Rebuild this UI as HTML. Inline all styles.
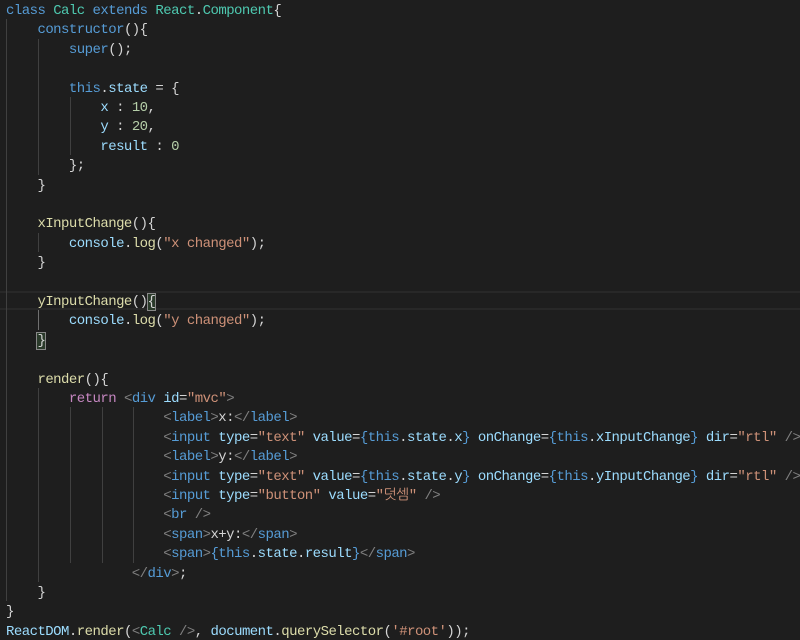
<!DOCTYPE html>
<html><head><meta charset="utf-8"><style>
html,body{margin:0;padding:0;background:#1e1e1e;width:800px;height:640px;overflow:hidden}
#c{position:relative;width:800px;height:640px}
.l{position:absolute;left:6px;height:19.4px;line-height:19.4px;white-space:pre;font-family:"Liberation Mono","NanumGothic",monospace;font-size:14px;letter-spacing:-0.54px;color:#d4d4d4;margin-top:2px}
.g{position:absolute;width:1px;background:#404040}
.k{color:#569cd6}.t{color:#4ec9b0}.v{color:#9cdcfe}.f{color:#dcdcaa}.s{color:#ce9178}.n{color:#b5cea8}.p{color:#c586c0}.b{color:#808080}
.m{outline:1px solid #888;background:#2a3a2a}
</style></head><body><div id="c">
<div style="position:absolute;left:0;top:291px;width:800px;height:19.4px;border-top:2px solid #282828;border-bottom:2px solid #282828;box-sizing:border-box"></div>
<div class="g" style="left:6px;top:19.4px;height:582px"></div>
<div class="g" style="left:38px;top:38.8px;height:135.8px"></div>
<div class="g" style="left:38px;top:232.8px;height:19.4px"></div>
<div class="g" style="left:38px;top:310.4px;height:19.4px;background:#707070"></div>
<div class="g" style="left:38px;top:388px;height:194px"></div>
<div class="g" style="left:70px;top:97px;height:58.2px"></div>
<div class="g" style="left:70px;top:407.4px;height:155.2px"></div>
<div class="g" style="left:102px;top:407.4px;height:155.2px"></div>
<div class="g" style="left:133px;top:407.4px;height:155.2px"></div>
<div class="l" style="top:0"><span class="k">class</span> <span class="t">Calc</span> <span class="k">extends</span> <span class="t">React</span>.<span class="t">Component</span>{</div>
<div class="l" style="top:19.4px">    <span class="k">constructor</span>(){</div>
<div class="l" style="top:38.8px">        <span class="k">super</span>();</div>
<div class="l" style="top:77.6px">        <span class="k">this</span>.<span class="v">state</span> = {</div>
<div class="l" style="top:97px">            <span class="v">x</span> : <span class="n">10</span>,</div>
<div class="l" style="top:116.4px">            <span class="v">y</span> : <span class="n">20</span>,</div>
<div class="l" style="top:135.8px">            <span class="v">result</span> : <span class="n">0</span></div>
<div class="l" style="top:155.2px">        };</div>
<div class="l" style="top:174.6px">    }</div>
<div class="l" style="top:213.4px">    <span class="f">xInputChange</span>(){</div>
<div class="l" style="top:232.8px">        <span class="v">console</span>.<span class="f">log</span>(<span class="s">"x changed"</span>);</div>
<div class="l" style="top:252.2px">    }</div>
<div class="l" style="top:291px">    <span class="f">yInputChange</span>()<span class="m">{</span></div>
<div class="l" style="top:310.4px">        <span class="v">console</span>.<span class="f">log</span>(<span class="s">"y changed"</span>);</div>
<div class="l" style="top:329.8px">    <span class="m">}</span></div>
<div class="l" style="top:368.6px">    <span class="f">render</span>(){</div>
<div class="l" style="top:388px">        <span class="p">return</span> <span class="b">&lt;</span><span class="k">div</span> <span class="v">id</span>=<span class="s">"mvc"</span><span class="b">&gt;</span></div>
<div class="l" style="top:407.4px">                    <span class="b">&lt;</span><span class="k">label</span><span class="b">&gt;</span>x:<span class="b">&lt;/</span><span class="k">label</span><span class="b">&gt;</span></div>
<div class="l" style="top:426.8px">                    <span class="b">&lt;</span><span class="k">input</span> <span class="v">type</span>=<span class="s">"text"</span> <span class="v">value</span>=<span class="k">{this</span>.<span class="v">state</span>.<span class="v">x</span><span class="k">}</span> <span class="v">onChange</span>=<span class="k">{this</span>.<span class="v">xInputChange</span><span class="k">}</span> <span class="v">dir</span>=<span class="s">"rtl"</span> <span class="b">/&gt;</span></div>
<div class="l" style="top:446.2px">                    <span class="b">&lt;</span><span class="k">label</span><span class="b">&gt;</span>y:<span class="b">&lt;/</span><span class="k">label</span><span class="b">&gt;</span></div>
<div class="l" style="top:465.6px">                    <span class="b">&lt;</span><span class="k">input</span> <span class="v">type</span>=<span class="s">"text"</span> <span class="v">value</span>=<span class="k">{this</span>.<span class="v">state</span>.<span class="v">y</span><span class="k">}</span> <span class="v">onChange</span>=<span class="k">{this</span>.<span class="v">yInputChange</span><span class="k">}</span> <span class="v">dir</span>=<span class="s">"rtl"</span> <span class="b">/&gt;</span></div>
<div class="l" style="top:485px">                    <span class="b">&lt;</span><span class="k">input</span> <span class="v">type</span>=<span class="s">"button"</span> <span class="v">value</span>=<span class="s">"덧셈"</span> <span class="b">/&gt;</span></div>
<div class="l" style="top:504.4px">                    <span class="b">&lt;</span><span class="k">br</span> <span class="b">/&gt;</span></div>
<div class="l" style="top:523.8px">                    <span class="b">&lt;</span><span class="k">span</span><span class="b">&gt;</span>x+y:<span class="b">&lt;/</span><span class="k">span</span><span class="b">&gt;</span></div>
<div class="l" style="top:543.2px">                    <span class="b">&lt;</span><span class="k">span</span><span class="b">&gt;</span><span class="k">{this</span>.<span class="v">state</span>.<span class="v">result</span><span class="k">}</span><span class="b">&lt;/</span><span class="k">span</span><span class="b">&gt;</span></div>
<div class="l" style="top:562.6px">                <span class="b">&lt;/</span><span class="k">div</span><span class="b">&gt;</span>;</div>
<div class="l" style="top:582px">    }</div>
<div class="l" style="top:601.4px">}</div>
<div class="l" style="top:620.8px"><span class="v">ReactDOM</span>.<span class="f">render</span>(<span class="b">&lt;</span><span class="t">Calc</span> <span class="b">/&gt;</span>, <span class="v">document</span>.<span class="f">querySelector</span>(<span class="s">'#root'</span>));</div>
</div></body></html>
